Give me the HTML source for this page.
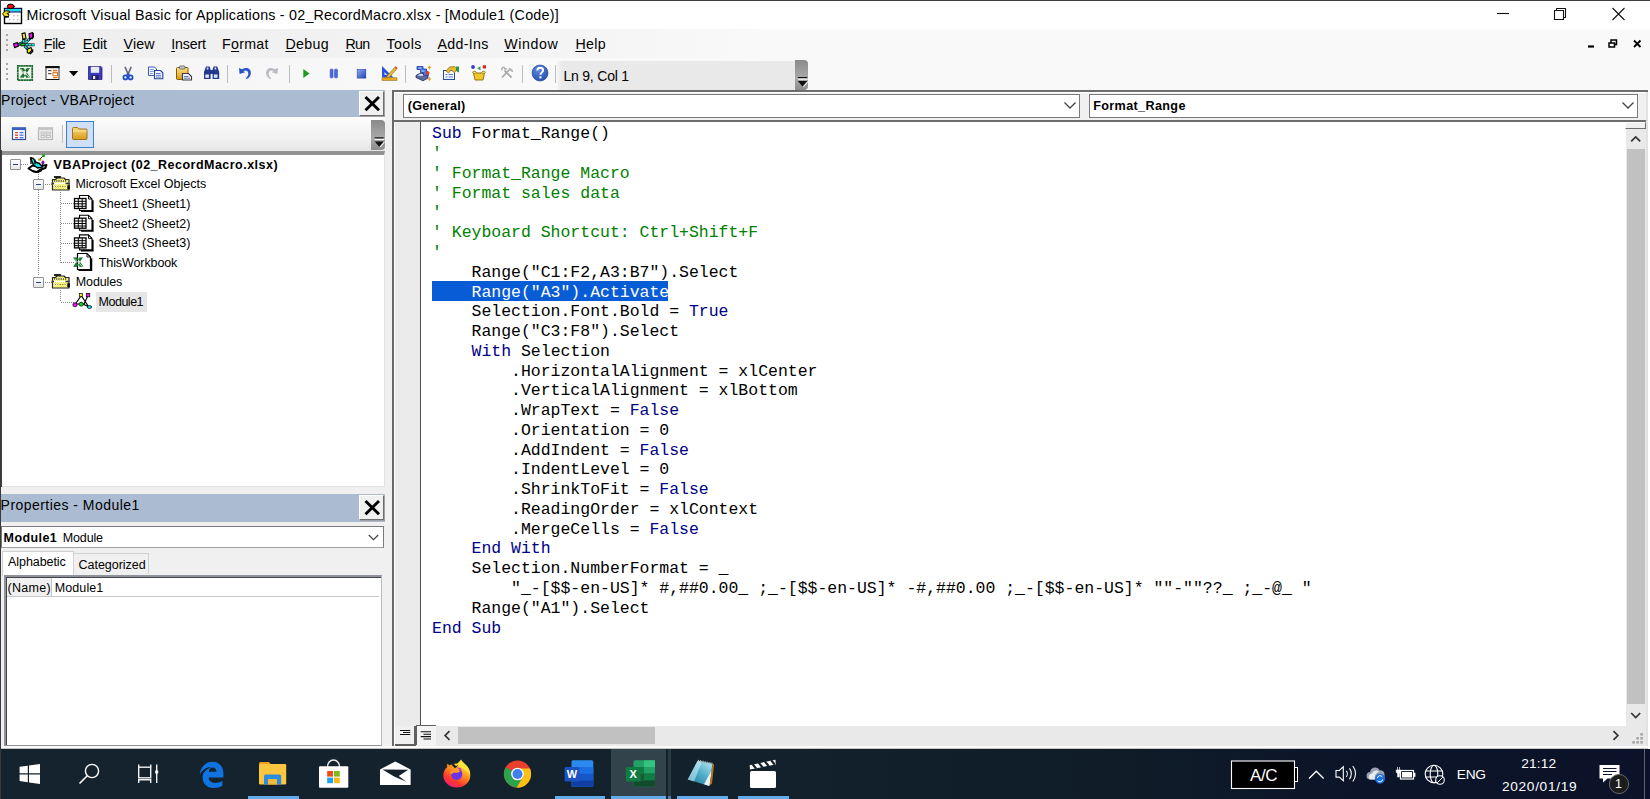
<!DOCTYPE html>
<html lang="en">
<head>
<meta charset="utf-8">
<title>Microsoft Visual Basic for Applications - 02_RecordMacro.xlsx - [Module1 (Code)]</title>
<style>
*{box-sizing:border-box;margin:0;padding:0}
html,body{width:1650px;height:799px;overflow:hidden;background:#f0f0f0}
body{position:relative;font-family:"Liberation Sans",sans-serif;color:#000;font-size:15px}
.a{position:absolute}
.t{position:absolute;white-space:pre;line-height:1}
u{text-decoration:underline;text-underline-offset:2px;text-decoration-thickness:1px}
#titlebar{left:1px;top:1px;width:1649px;height:28px;background:#fff}
#frame-top{left:0;top:0;width:1650px;height:1px;background:#3c3c3c}
#frame-left{left:0;top:0;width:1px;height:799px;background:#3a3a3c;z-index:5}
#menubar{left:1px;top:29px;width:1649px;height:29px;background:linear-gradient(90deg,#eeeeee 0,#f3f3f3 500px,#f9f9f9 760px)}
#toolbar{left:1px;top:58px;width:1649px;height:32px;background:linear-gradient(90deg,#f4f4f4 0,#f9f9f9 500px)}
.menu{}
#lncol{left:557px;top:61px;width:238px;height:28.500px;background:linear-gradient(90deg,#f6f6f6 0,#e9e9e9 5px)}
.sep{width:1px;height:22px;top:64px;background:#c4c4c4}
.grip{width:13px;background:linear-gradient(180deg,#8e8e8e 0,#a8a8a8 60%,#8a8a8a 100%);border-radius:0 4px 4px 0}
/* left panels */
.ptitle{left:1px;width:384px;height:27px;background:#abbcd2}
.pclose{width:25px;height:25px;background:#f0f0f0;border:1px solid;border-color:#fff #6d6d6d #6d6d6d #fff;box-shadow:1px 1px 0 #a0a0a0}
#tree{left:1px;top:154px;width:383px;height:333px;background:#fff}
.tr{font-size:13px}

#ptool{left:1px;top:117px;width:384px;height:34px;background:linear-gradient(180deg,#fdfdfd 0,#f2f2f2 60%,#e6e6e6 100%);border-bottom:0}
#tree{left:1px;top:151px;width:384px;height:336px;background:#fff;border-top:4px solid #929292;border-right:1px solid #e3e3e3;border-bottom:1px solid #e3e3e3}
#treeL{left:0;top:150px;width:2px;height:337px;background:#404040}
.vdot{width:1px;background:repeating-linear-gradient(180deg,#8a8a8a 0,#8a8a8a 1px,transparent 1px,transparent 2px)}
.hdot{height:1px;background:repeating-linear-gradient(90deg,#8a8a8a 0,#8a8a8a 1px,transparent 1px,transparent 2px)}
.xbox{width:11px;height:11px;border:1px solid #919191;background:linear-gradient(180deg,#fff,#e6e6e6);border-radius:1px}
.xbox:after{content:"";position:absolute;left:2px;top:4px;width:5px;height:1px;background:#2a3f8f}
#modsel{left:96px;top:292px;width:51px;height:20px;background:#e6e6e6}
#pcombo{left:1px;top:526px;width:383px;height:22px;background:#fff;border:1px solid #7a7a7a;border-bottom-color:#a0a0a0}
#tab1{left:2px;top:551px;width:72px;height:25px;background:#fff;border:1px solid #d0d0d0;border-bottom:0}
#tab2{left:73px;top:553px;width:76px;height:21px;background:#f0f0f0;border:1px solid #d0d0d0;border-bottom:0}
#plist{left:4px;top:575px;width:378px;height:171px;background:#fff;border:solid;border-width:2px 1px 1px 2px;border-color:#8f939c #b8bcc4 #8f939c #8f939c;box-shadow:inset 1px 1px 0 #444}
#pname{left:7px;top:578px;width:45px;height:18px;background:#f0f0f0;border-right:1px solid #c8c8c8}
#prow{left:7px;top:596px;width:372px;height:1px;background:#c8c8c8}
/* code window */
#codewin{left:392px;top:90px;width:1256px;height:657px;background:#f0f0f0;border-left:2px solid #696969;border-top:2px solid #6d6d6d;box-shadow:inset 1px 1px 0 #fff}
.combo{top:94px;height:24px;background:#fff;border:1px solid #7a7a7a}
#codearea{left:394px;top:120px;width:1252px;height:606px;background:#fff;border-top:2px solid #6d6d6d}
#margin{left:395px;top:122px;width:25px;height:604px;background:#ebebeb}
#marginline{left:420px;top:122px;width:1px;height:604px;background:#4d4d4d}
pre#code{left:432px;top:124.4px;font-family:"Liberation Mono",monospace;font-size:16.475px;line-height:19.77px;color:#000;white-space:pre}
.k{color:#000088}.c{color:#008000}
.sel{color:#fff}
#selbg{left:432px;top:281px;width:236px;height:20px;background:#085cd6}

#vscroll{left:1626px;top:129px;width:20px;height:617px;background:#e9e9e9}
#vthumb{left:1627px;top:149px;width:18px;height:555px;background:#c1c1c1}
#hscroll{left:436px;top:726px;width:1190px;height:20px;background:#e9e9e9}
#hthumb{left:458px;top:727px;width:197px;height:17px;background:#c1c1c1}
#split{left:1625px;top:122px;width:21px;height:7px;background:#f0f0f0;border:1px solid;border-color:#fff #6d6d6d #6d6d6d #fff}
#vb1{left:395px;top:726px;width:21px;height:20px;background:#efefef;border:solid;border-width:0 2px 2px 0;border-color:#5f5f5f}
#vb2{left:416px;top:725px;width:20px;height:20px;background:#f3f3f3;border:solid;border-width:1px 0 0 1px;border-color:#5f5f5f}
.tk{color:#fff}
#taskbar{left:0;top:749px;width:1650px;height:50px;background:linear-gradient(90deg,#14232d 0,#12212b 800px,#0f1c28 1150px,#0c1529 1330px,#0b1229 1650px)}
</style>
</head>
<body>
<div class="a" id="titlebar"></div>
<div class="a" id="menubar"></div>
<div class="a" id="toolbar"></div>
<div class="a" id="frame-top"></div>
<div class="a" id="frame-left"></div>

<!-- TITLE -->
<span class="t" id="title" style="left:26.6px;top:7.80px;font-size:14.3px;letter-spacing:0.22px">Microsoft Visual Basic for Applications - 02_RecordMacro.xlsx - [Module1 (Code)]</span>

<!-- MENU -->
<span class="t menu" id="m1" style="left:43.8px;top:37.48px;font-size:14.2px;letter-spacing:-0.34px"><u>F</u>ile</span>
<span class="t menu" id="m2" style="left:82.8px;top:37.48px;font-size:14.2px;letter-spacing:-0.14px"><u>E</u>dit</span>
<span class="t menu" id="m3" style="left:123.6px;top:37.48px;font-size:14.2px;letter-spacing:0.14px"><u>V</u>iew</span>
<span class="t menu" id="m4" style="left:171.2px;top:37.48px;font-size:14.2px;letter-spacing:-0.16px"><u>I</u>nsert</span>
<span class="t menu" id="m5" style="left:222.0px;top:37.48px;font-size:14.2px;letter-spacing:0.28px">F<u>o</u>rmat</span>
<span class="t menu" id="m6" style="left:285.4px;top:37.48px;font-size:14.2px;letter-spacing:0.35px"><u>D</u>ebug</span>
<span class="t menu" id="m7" style="left:345.6px;top:37.48px;font-size:14.2px;letter-spacing:-0.80px"><u>R</u>un</span>
<span class="t menu" id="m8" style="left:386.4px;top:37.48px;font-size:14.2px;letter-spacing:0.48px"><u>T</u>ools</span>
<span class="t menu" id="m9" style="left:437.4px;top:37.48px;font-size:14.2px;letter-spacing:0.36px"><u>A</u>dd-Ins</span>
<span class="t menu" id="m10" style="left:504.2px;top:37.48px;font-size:14.2px;letter-spacing:0.60px"><u>W</u>indow</span>
<span class="t menu" id="m11" style="left:575.4px;top:37.48px;font-size:14.2px;letter-spacing:0.34px"><u>H</u>elp</span>

<!-- TOOLBAR -->
<div class="a" id="lncol"></div>
<span class="t" id="lnc" style="left:563.4px;top:68.65px;font-size:14px;letter-spacing:-0.20px">Ln 9, Col 1</span>

<!-- ICON OVERLAY 1: title, menu, toolbar -->
<svg class="a" id="ov1" style="left:0;top:0" width="1650" height="120" viewBox="0 0 1650 120" shape-rendering="auto">
<defs>
<linearGradient id="gBlue" x1="0" y1="0" x2="1" y2="1"><stop offset="0" stop-color="#8fb0f2"/><stop offset="1" stop-color="#1f3fb0"/></linearGradient>
<linearGradient id="gGold" x1="0" y1="0" x2="0" y2="1"><stop offset="0" stop-color="#ffe28a"/><stop offset="1" stop-color="#d89a12"/></linearGradient>
<linearGradient id="gGrip" x1="0" y1="0" x2="0" y2="1"><stop offset="0" stop-color="#8a8a8a"/><stop offset="0.6" stop-color="#a9a9a9"/><stop offset="1" stop-color="#8c8c8c"/></linearGradient>
<radialGradient id="gHelp" cx="0.4" cy="0.3" r="0.8"><stop offset="0" stop-color="#5f8be0"/><stop offset="1" stop-color="#1f4aa8"/></radialGradient>
</defs>
<!-- title icon -->
<g>
<rect x="4.5" y="8.5" width="17" height="15" fill="#fff" stroke="#000" stroke-width="1.4"/>
<rect x="5" y="9" width="16" height="2.6" fill="#19e0e8"/>
<rect x="5" y="8" width="16" height="1" fill="#101070"/>
<rect x="5" y="11.4" width="16" height="1.1" fill="#101070"/>
<g fill="#b8b8b8"><rect x="13" y="15" width="1.4" height="1.4"/><rect x="17" y="15" width="1.4" height="1.4"/><rect x="9" y="19" width="1.4" height="1.4"/><rect x="13" y="19" width="1.4" height="1.4"/><rect x="17" y="19" width="1.4" height="1.4"/></g>
<ellipse cx="10.6" cy="6.4" rx="3.3" ry="2.3" fill="#f01010" stroke="#000" stroke-width="1"/>
<path d="M13 5.5l2.2.6-1 1.4z" fill="#000"/>
<path d="M2.5 13.8L5.5 10.8L9.2 11L9.2 13L6.8 13.4L9 14.6L8.4 16.6L4.6 16.4Z" fill="#f2e010" stroke="#000" stroke-width="0.9" stroke-linejoin="round"/>
<path d="M5 17.2l4-.3" stroke="#000" stroke-width="1.2"/>
</g>
<!-- menu grip -->
<g fill="#a6a6a6"><rect x="6" y="34" width="2" height="2"/><rect x="6" y="39" width="2" height="2"/><rect x="6" y="44" width="2" height="2"/><rect x="6" y="49" width="2" height="2"/>
<rect x="6" y="63" width="2" height="2"/><rect x="6" y="68" width="2" height="2"/><rect x="6" y="73" width="2" height="2"/><rect x="6" y="78" width="2" height="2"/></g>
<!-- menu VBA icon -->
<g stroke-linejoin="round" stroke-linecap="butt">
<path d="M17 45.300L22.500 42.600M23.600 42.500L23.800 38.500M25.500 42.500L30 38.500M25.500 44.700L34.500 44.900M24.800 46L28.800 50" stroke="#000" stroke-width="2.900" fill="none"/>
<path d="M17 45.300L22.500 42.600M23.600 42.500L23.800 38.500M25.500 42.500L30 38.500M25.500 44.700L34.500 44.900M24.800 46L28.800 50" stroke="#19e0e8" stroke-width="1.700" fill="none" stroke-dasharray="2.600 0.500"/>
<path d="M22 33.600l3-.8 1 5.800-3 .8z" fill="#f4ec10" stroke="#000" stroke-width="1.100"/>
<path d="M29 33.800l3.600-1.200.6 4.400-3.400 2.400z" fill="#f010f0" stroke="#000" stroke-width="1.100"/>
<path d="M33 33v4.500l-1.500 1.500" stroke="#000" stroke-width="1.600" fill="none"/>
<path d="M13.600 43.800l3.800-1.200 1.200 3.400-4 1.800z" fill="#f010f0" stroke="#000" stroke-width="1.100"/>
<rect x="20.800" y="43.200" width="4.400" height="2.600" fill="#10e010" stroke="#000" stroke-width="1"/>
<path d="M27.400 49.200l3.600-1.600 1 2.200-2.800 3.600-2-1z" fill="#f4ec10" stroke="#000" stroke-width="1.100"/>
<path d="M32.500 49.500v2l-2.500 2.500" stroke="#000" stroke-width="1.600" fill="none"/>
</g>
<!-- window controls -->
<g stroke="#111" stroke-width="1.1" fill="none">
<path d="M1497 13.5h12"/>
<path d="M1554.5 10.5h9v9h-9zM1556.5 10.5v-2h9v9h-2" stroke-linejoin="round"/>
<path d="M1612.5 8l12 12M1624.500 8l-12 12"/>
</g>
<g stroke="#000" stroke-width="1.6" fill="none">
<path d="M1588 46.500h6" stroke-width="2.2"/>
<path d="M1609 43h5.500v4h-5.500zM1611 42.500v-2.500h5.500v4.500h-1.500" stroke-width="1.5"/>
<path d="M1634 40.500l6.500 6.500M1640.500 40.500l-6.500 6.500" stroke-width="1.8"/>
</g>
</svg>
<!-- ICON OVERLAY 2: standard toolbar -->
<svg class="a" id="ov2" style="left:0;top:58px" width="820" height="34" viewBox="0 58 820 34">
<!-- separators -->
<g fill="#bdbdbd"><rect x="111" y="65" width="1" height="18"/><rect x="227" y="65" width="1" height="18"/><rect x="289" y="65" width="1" height="18"/><rect x="405" y="65" width="1" height="18"/><rect x="522" y="65" width="1" height="18"/><rect x="555" y="65" width="1" height="18"/></g>
<!-- excel -->
<rect x="17.800" y="65.800" width="14.400" height="14.400" fill="#eef4ee" stroke="#1b6a2c" stroke-width="1.700" stroke-dasharray="2.400 0.300"/>
<path d="M19.800 68.200l3.800-.2 6.600 9.600-3.800.2zM30 68l-3.400.2-6.800 9.400 3.800.2z" fill="#1c7030"/>
<path d="M21 69.500l8.500 8" stroke="#e8f4e8" stroke-width="0.900"/>
<!-- userform -->
<rect x="46" y="66.500" width="13" height="13" fill="#fff" stroke="#3a3a3a" stroke-width="1"/>
<rect x="45.500" y="66" width="14" height="2.200" fill="#111"/>
<rect x="48" y="70" width="3.500" height="1.200" fill="#555"/><rect x="48" y="73" width="3.500" height="1.200" fill="#555"/>
<rect x="53" y="69.800" width="4.500" height="1.600" fill="#e8781a"/><rect x="53" y="72.600" width="4.500" height="3.200" fill="none" stroke="#e8781a" stroke-width="1.100"/><rect x="53" y="77" width="4.500" height="1.200" fill="#e8781a"/>
<rect x="46" y="79" width="13" height="1" fill="#111"/>
<path d="M69 71h9.200l-4.600 5.200z" fill="#000"/>
<!-- save -->
<path d="M88.500 66.500h12.500l1 1v12h-13.500z" fill="#3d3bbd" stroke="#26248c" stroke-width="0.800"/>
<rect x="90.800" y="66.800" width="8.400" height="6" fill="#e8ecf8"/>
<rect x="91.500" y="75.200" width="7" height="4.600" fill="#23215e"/><rect x="93" y="76" width="2.200" height="3" fill="#e8ecf8"/>
<!-- scissors -->
<path d="M125 66.800l3.600 8.500M131.200 66.800l-3.600 8.500" stroke="#6a7080" stroke-width="1.700" fill="none"/>
<circle cx="125.400" cy="77.400" r="2" fill="none" stroke="#1f4fc8" stroke-width="1.700"/><circle cx="130.600" cy="77.400" r="2" fill="none" stroke="#1f4fc8" stroke-width="1.700"/>
<path d="M126.400 75.600l1.600-2 1.600 2" stroke="#1f4fc8" stroke-width="1.500" fill="none"/>
<!-- copy -->
<path d="M148.500 67h6l2 2v6.500h-8z" fill="#f4f8ff" stroke="#3a5db0" stroke-width="1"/>
<path d="M149.800 69.500h4M149.800 71.500h4M149.800 73.500h3" stroke="#6f8fd0" stroke-width="0.900"/>
<path d="M154.500 70.500h6l2.300 2.300v6h-8.300z" fill="#f4f8ff" stroke="#24409a" stroke-width="1.100"/>
<path d="M156 73.500h4.500M156 75.300h5.200M156 77.100h5.200" stroke="#4a6ac0" stroke-width="0.900"/>
<!-- paste -->
<rect x="176.500" y="67.500" width="11.500" height="12" rx="1" fill="url(#gGold)" stroke="#8a5a08" stroke-width="1"/>
<rect x="179.500" y="66" width="5.500" height="3" rx="1" fill="#c9c9c9" stroke="#555" stroke-width="0.800"/>
<path d="M182.500 73.500h6l3 3v3.500h-9z" fill="#eef2fa" stroke="#3a3a4a" stroke-width="1.100"/>
<path d="M184 76.500h4.500M184 78.200h6" stroke="#5a6a9a" stroke-width="0.900"/>
<!-- binoculars -->
<g fill="#24388e"><path d="M206 66.500h3.600l1 3v9.500h-6.600v-7zM213.600 66.500h3.600l2 5.500v7h-6.600v-9.500z"/><rect x="209.800" y="70" width="3.400" height="4"/></g>
<g fill="#dfe6fa"><rect x="205.300" y="74.500" width="3.600" height="3.300"/><rect x="213.900" y="74.500" width="3.600" height="3.300"/><rect x="206.800" y="67.500" width="1.600" height="2"/><rect x="214.600" y="67.500" width="1.600" height="2"/></g>
<!-- undo -->
<path d="M239 68l.6 6 5.600-1.800-1.900-1.200c2.400-1.400 5-.2 5 2.600 0 2-1 3.500-2.600 4.800l1 .7c2.600-1.400 4.200-3.600 4.200-6.200 0-4.400-4.600-6.400-8.800-3.600z" fill="#2a55c8"/>
<!-- redo -->
<path d="M278 68l-.6 6-5.600-1.800 1.900-1.200c-2.400-1.400-5-.2-5 2.600 0 2 1 3.500 2.600 4.800l-1 .7c-2.600-1.400-4.200-3.600-4.200-6.200 0-4.400 4.600-6.400 8.800-3.600z" fill="#b9bcc2"/>
<!-- run/pause/stop -->
<path d="M303.300 69l6.200 4.500-6.200 4.500z" fill="#1a9a20"/>
<rect x="330.200" y="69.200" width="2.800" height="8.600" rx="0.700" fill="#4a6fe0" stroke="#2440b0" stroke-width="0.600"/><rect x="334.600" y="69.200" width="2.800" height="8.600" rx="0.700" fill="#4a6fe0" stroke="#2440b0" stroke-width="0.600"/>
<rect x="357.200" y="69.500" width="8.600" height="8.600" fill="url(#gBlue)" stroke="#2440b0" stroke-width="0.600"/>
<!-- design mode -->
<path d="M382 66v11.500h11.500z" fill="#2a52d8"/><path d="M384.500 72v3h3z" fill="#cfdcff"/>
<path d="M387 76l7.500-8.500 2 1.800-7.500 8.500-2.600.8z" fill="#e9b62e" stroke="#7a5a10" stroke-width="0.500"/>
<path d="M394.500 67.500l1.200-1.300 2 1.800-1.200 1.300z" fill="#e04a3a"/>
<rect x="382" y="77.800" width="15" height="2.600" fill="#e8a818" stroke="#8a5a08" stroke-width="0.500"/>
<!-- project explorer -->
<path d="M416 75.500l5-2.500 7 3-5 2.800z" fill="#e8eefc" stroke="#1a2a6a" stroke-width="1"/>
<path d="M416 75.500v2l7 3.300 5-2.800v-2" fill="#5a6a9a" stroke="#1a2a6a" stroke-width="0.800"/>
<path d="M417 66.500h6v2.500h3.500v3h2v3.500h-5v-3h-3v-3h-3.500z" fill="#4a78e0" stroke="#1a3aa0" stroke-width="0.800"/>
<path d="M418.500 68h3M421.500 71h3" stroke="#dfe8ff" stroke-width="0.800"/>
<path d="M429.500 65.500l1.600 2-1.600 2-1.600-2zM429.500 77l1.600 2-1.600 2-1.600-2z" fill="#f0a020"/><path d="M427.500 70.500l2.400 2.500-2.400 2.500-2.200-2.500z" fill="#e83a2a"/>
<!-- properties -->
<rect x="443.500" y="70.500" width="11" height="9" fill="#f2f6ff" stroke="#2a4a9a" stroke-width="1"/>
<path d="M445.500 74.500h2M445.500 77h2M448.500 74.500h4.500M448.500 77h4.500" stroke="#5a7ac0" stroke-width="1"/>
<path d="M446 71l3.500-4 5-.5 3 2.500-3 3.500-3.500-2.500-2.500 3z" fill="#e8b838" stroke="#8a6a10" stroke-width="0.700"/>
<path d="M456 66.500l3 0v6l-3-1.500z" fill="#2a9a4a"/>
<!-- object browser -->
<path d="M473.500 73h11l-1.500 7h-8z" fill="#f0c82a" stroke="#8a6a08" stroke-width="0.900"/>
<path d="M472 72.500l3-1.500 2 2.500M486 72.500l-3-1.500-2 2.500" fill="#f8e070" stroke="#8a6a08" stroke-width="0.800"/>
<circle cx="473" cy="67" r="1.900" fill="#3a3ac8"/><rect x="482.800" y="65.300" width="3.200" height="3.200" fill="#e02020"/><path d="M480.500 66.200v4l-3.300-2z" fill="#2aa040"/>
<!-- toolbox (disabled) -->
<path d="M502 77.500l8-8.500M511.500 77.500l-7-7" stroke="#a9a9a9" stroke-width="1.800" fill="none"/>
<path d="M502 70.500c-.8-1.500 0-3 2-3.300l1.200 2 1.600-.5" stroke="#a9a9a9" stroke-width="1.300" fill="none"/>
<path d="M508.500 67.500l3.500 1.500 1.500 2.500-1.500.5-2.500-2z" fill="#b5b5b5"/>
<!-- help -->
<circle cx="540" cy="73" r="8" fill="url(#gHelp)" stroke="#1a3f98" stroke-width="0.600"/>
<path d="M537.300 70.600c0-1.800 1.200-2.800 2.900-2.800 1.700 0 2.900 1 2.900 2.500 0 2-2.600 2.200-2.600 4.500" stroke="#fff" stroke-width="1.900" fill="none"/><rect x="539.400" y="76.300" width="2.100" height="2.100" fill="#fff"/>
<!-- end grip -->
<path d="M795 60h9a4 4 0 0 1 4 4v22a4 4 0 0 1-4 4h-9z" fill="url(#gGrip)"/>
<rect x="797.800" y="77" width="9.400" height="1.300" fill="#111"/><rect x="797.800" y="78.500" width="10" height="1.200" fill="#fff"/><path d="M797.800 81h9.400l-4.700 5.400z" fill="#111"/>
<path d="M803.300 87l4.700-5.500" stroke="#fff" stroke-width="1"/>
</svg>

<!-- PROJECT PANEL -->
<div class="a ptitle" style="top:90px"></div>
<span class="t" id="pt1" style="left:1px;top:93.45px;font-size:14px;letter-spacing:0.29px">Project - VBAProject</span>
<div class="a pclose" style="left:359px;top:91px"><svg width="23" height="23" viewBox="0 0 23 23"><path d="M5.500 5L19 18.200M19 5L5.500 18.200" stroke="#000" stroke-width="2.900" fill="none"/></svg></div>
<div class="a" id="ptool"></div>
<div class="a" id="tree"></div>
<div class="a" id="treeL"></div>
<!-- tree lines -->
<div class="a vdot" style="left:38px;top:172px;height:104px"></div>
<div class="a vdot" style="left:60px;top:192px;height:71px"></div>
<div class="a vdot" style="left:60px;top:290px;height:12px"></div>
<div class="a hdot" style="left:21px;top:164px;width:8px"></div>
<div class="a hdot" style="left:43px;top:184px;width:9px"></div>
<div class="a hdot" style="left:43px;top:282px;width:9px"></div>
<div class="a hdot" style="left:61px;top:203px;width:13px"></div>
<div class="a hdot" style="left:61px;top:223px;width:13px"></div>
<div class="a hdot" style="left:61px;top:243px;width:13px"></div>
<div class="a hdot" style="left:61px;top:262px;width:13px"></div>
<div class="a hdot" style="left:61px;top:302px;width:13px"></div>
<div class="a xbox" style="left:10px;top:159px"></div>
<div class="a xbox" style="left:33px;top:179px"></div>
<div class="a xbox" style="left:33px;top:277px"></div>
<div class="a" id="modsel"></div>
<span class="t tr" id="tr1" style="left:53.6px;top:158.87px;font-weight:bold;font-size:12.5px;letter-spacing:0.48px">VBAProject (02_RecordMacro.xlsx)</span>
<span class="t tr" id="tr2" style="left:75.4px;top:178.22px;font-size:12.5px;letter-spacing:0.01px">Microsoft Excel Objects</span>
<span class="t tr" id="tr3" style="left:98.4px;top:197.72px;font-size:12.5px;letter-spacing:0.07px">Sheet1 (Sheet1)</span>
<span class="t tr" id="tr4" style="left:98.4px;top:217.52px;font-size:12.5px;letter-spacing:0.07px">Sheet2 (Sheet2)</span>
<span class="t tr" id="tr5" style="left:98.4px;top:236.92px;font-size:12.5px;letter-spacing:0.07px">Sheet3 (Sheet3)</span>
<span class="t tr" id="tr6" style="left:98.8px;top:256.52px;font-size:12.5px;letter-spacing:-0.10px">ThisWorkbook</span>
<span class="t tr" id="tr7" style="left:75.8px;top:276.42px;font-size:12.5px;letter-spacing:-0.14px">Modules</span>
<span class="t tr" id="tr8" style="left:98.6px;top:296.12px;font-size:12.5px;letter-spacing:-0.50px">Module1</span>

<!-- ICON OVERLAY 3: project panel toolbar + tree icons -->
<svg class="a" id="ov3" style="left:0;top:117px" width="386" height="200" viewBox="0 117 386 200">
<defs>
<linearGradient id="gFold" x1="0" y1="0" x2="0" y2="1"><stop offset="0" stop-color="#f8d878"/><stop offset="1" stop-color="#d89a1a"/></linearGradient>
<pattern id="dith" width="2" height="2" patternUnits="userSpaceOnUse"><rect width="2" height="2" fill="#f4f000"/><rect width="1" height="1" fill="#fff"/><rect x="1" y="1" width="1" height="1" fill="#fff"/></pattern>
</defs>
<!-- view code -->
<rect x="12.500" y="128" width="13" height="11.500" fill="#fff" stroke="#2f4f9f" stroke-width="1.200"/>
<rect x="12" y="127.500" width="14" height="2.600" fill="#3a62c0"/>
<g fill="#e0402a"><rect x="15" y="132" width="3" height="1.300"/><rect x="15" y="134.500" width="3" height="1.300"/><rect x="15" y="137" width="3" height="1.300"/></g>
<g fill="#4a72d0"><rect x="19.500" y="132" width="4" height="1.300"/><rect x="19.500" y="134.500" width="4" height="1.300"/><rect x="19.500" y="137" width="4" height="1.300"/></g>
<!-- view object (disabled) -->
<rect x="38.500" y="128" width="14" height="11.500" fill="#ececec" stroke="#b8b8b8" stroke-width="1.200"/>
<rect x="38" y="127.500" width="15" height="2.400" fill="#c4c4c4"/>
<g fill="none" stroke="#bdbdbd" stroke-width="0.900"><rect x="41" y="132" width="4" height="2"/><rect x="46.500" y="132" width="4" height="2"/><rect x="41" y="135.500" width="4" height="2"/><rect x="46.500" y="135.500" width="4" height="2"/></g>
<rect x="62" y="125" width="1" height="18" fill="#bdbdbd"/>
<!-- toggle folders (pressed) -->
<rect x="66.500" y="121.500" width="27" height="26" fill="#cfe0f6" stroke="#3c7fd8" stroke-width="1"/>
<path d="M72.500 128.500a1 1 0 0 1 1-1h4l1.500 1.500h7a1 1 0 0 1 1 1v8.500a1 1 0 0 1-1 1h-12.500a1 1 0 0 1-1-1z" fill="url(#gFold)" stroke="#9a6a10" stroke-width="0.900"/>
<path d="M73 131h13.500" stroke="#fbe9a8" stroke-width="1"/>
<!-- grip -->
<path d="M371 120h10a4 4 0 0 1 4 4v22a4 4 0 0 1-4 4h-10z" fill="url(#gGrip)"/>
<rect x="374.700" y="137.300" width="9" height="1.300" fill="#111"/><rect x="374.700" y="138.800" width="9.600" height="1.200" fill="#fff"/><path d="M374.700 141.400h9l-4.500 5.300z" fill="#111"/>
<path d="M380 147.200l4.500-5.300" stroke="#fff" stroke-width="1"/>
<!-- project icon -->
<g>
<path d="M28.500 168.500l4-3 6 1 8-1.500-1 3-5 1.500-4 2.500-4-1z" fill="#fff" stroke="#000" stroke-width="1.900" stroke-linejoin="round"/><path d="M33 171.500l5 .8 4-2" stroke="#000" stroke-width="1.400" fill="none"/>
<path d="M30.500 158l3 .5 2 3.500 4 1.500 3 3.500-5 1-4-3z" fill="#19e0e8" stroke="#000" stroke-width="1.400" stroke-linejoin="round"/>
<path d="M31 157v7M35 159.500v5" stroke="#000" stroke-width="1.300"/>
<path d="M43 156l-3.500 3.500M42 162l1 4" stroke="#000" stroke-width="1"/>
<rect x="42.300" y="154.300" width="2.600" height="2.600" fill="#10a020"/><rect x="38.300" y="158.500" width="3" height="2.200" fill="#9a9a10"/><ellipse cx="43" cy="162.400" rx="1.400" ry="2" fill="#8010a0"/>
</g>
<!-- folder icons -->
<g id="fold1">
<path d="M54.500 177.500h6v-1h-6zM52.500 179.500h3l1.500-1.500h7l1.500 1.500h3.500v10.500h-16.500z" fill="url(#dith)" stroke="#222" stroke-width="1.200" stroke-linejoin="round"/>
<path d="M54 181h13" stroke="#444" stroke-width="1.400" stroke-dasharray="1.200 1"/>
<path d="M52 183.500h15.500" stroke="#fff" stroke-width="1.500"/><path d="M51.500 183.500h2.500M65.500 183.500h4" stroke="#333" stroke-width="1.300"/>
<path d="M55 186.500h11" stroke="#777" stroke-width="1" stroke-dasharray="1 1.400"/>
<rect x="67.300" y="185.300" width="2.500" height="3.900" fill="#000"/>
</g>
<use href="#fold1" y="98"/>
<!-- sheet icons -->
<g id="sh1">
<path d="M79.500 195.500h9l3.500 3.500v11.500h-12.500z" fill="#fff" stroke="#000" stroke-width="1.100"/>
<path d="M88.500 195.500v3.500h3.500" fill="none" stroke="#000" stroke-width="0.900"/>
<path d="M81 211.300h11.800v-11" fill="none" stroke="#000" stroke-width="1.600"/>
<rect x="74.500" y="198.500" width="11.500" height="10" fill="#fff" stroke="#000" stroke-width="1.300"/>
<path d="M74.500 201.300h11.500M74.500 203.800h11.500M74.500 206.300h11.500M78.300 198.500v10M82.200 198.500v10" stroke="#000" stroke-width="1"/>
</g>
<use href="#sh1" y="19.700"/><use href="#sh1" y="39.400"/>
<!-- ThisWorkbook -->
<path d="M77.500 253.500h9.500l3.500 3.500v12.500h-13z" fill="#fff" stroke="#000" stroke-width="1.200"/>
<path d="M87 253.500v3.500h3.500" fill="none" stroke="#000" stroke-width="0.900"/>
<path d="M78.500 270.300h13v-12" fill="none" stroke="#000" stroke-width="1.500"/>
<path d="M73 257.600l3.800-.4 6.600 9.400-3.600.4zM83 257.200l-3.600.3-6.400 9.200 3.800.3z" fill="#1f7a35"/>
<path d="M74.500 259l8 7.500" stroke="#dff0df" stroke-width="0.800"/>
<!-- module icon -->
<g stroke="#000" stroke-width="1.200" fill="none"><path d="M75 304.500l6-8.500M81 304h-5M81.500 296l7 10.500M88 295.500l-4 8.500M83 304l6 3"/></g>
<rect x="79.300" y="293.600" width="3" height="3" fill="#f4ec10" stroke="#000" stroke-width="0.700"/><rect x="86.600" y="293.400" width="3.200" height="3.400" fill="#f010f0" stroke="#000" stroke-width="0.700"/>
<ellipse cx="75" cy="304.800" rx="2.200" ry="2" fill="#f010f0" stroke="#000" stroke-width="0.700"/><ellipse cx="81.300" cy="304.200" rx="2.200" ry="1.900" fill="#10d020" stroke="#000" stroke-width="0.700"/><ellipse cx="89.500" cy="307" rx="2.200" ry="1.500" fill="#10e0e8" stroke="#000" stroke-width="0.700"/>
</svg>

<!-- PROPERTIES PANEL -->
<div class="a ptitle" style="top:494px;height:28px"></div>
<span class="t" id="pt2" style="left:0.6px;top:498.15px;font-size:14px;letter-spacing:0.46px">Properties - Module1</span>
<div class="a pclose" style="left:359px;top:495px"><svg width="23" height="23" viewBox="0 0 23 23"><path d="M5.500 5L19 18.200M19 5L5.500 18.200" stroke="#000" stroke-width="2.900" fill="none"/></svg></div>
<div class="a" id="pcombo"></div>
<span class="t tr" id="pc1" style="left:3.6px;top:531.62px;font-weight:bold;font-size:12.5px;letter-spacing:0.4px">Module1</span>
<span class="t tr" id="pc2" style="left:62.8px;top:531.62px;font-size:12.5px;letter-spacing:-0.16px">Module</span>
<svg class="a" style="left:366px;top:532px" width="14" height="10" viewBox="0 0 14 10"><path d="M2.800 3l4.700 4.700 4.700-4.700" stroke="#444" stroke-width="1.200" fill="none"/></svg>
<div class="a" id="tab2"></div>
<div class="a" id="tab1"></div>
<span class="t tr" id="tb1" style="left:8.0px;top:556.32px;font-size:12.5px;letter-spacing:-0.06px">Alphabetic</span>
<span class="t tr" id="tb2" style="left:78.6px;top:558.52px;font-size:12.5px;letter-spacing:-0.04px">Categorized</span>
<div class="a" id="plist"></div>
<div class="a" id="pname"></div>
<div class="a" id="prow"></div>
<span class="t tr" id="pn1" style="left:7.5px;top:582.42px;font-size:12.5px;letter-spacing:0.3px">(Name)</span>
<span class="t tr" id="pn2" style="left:54.8px;top:582.42px;font-size:12.5px;letter-spacing:0.08px">Module1</span>

<!-- CODE WINDOW -->
<div class="a" id="codewin"></div>
<div class="a combo" style="left:403px;width:677px"></div>
<div class="a combo" style="left:1089px;width:549px"></div>
<div class="a" id="codearea"></div>
<div class="a" id="margin"></div>
<div class="a" id="marginline"></div>

<span class="t tr" id="cb1" style="left:407.8px;top:99.53px;font-weight:bold;font-size:12.6px;letter-spacing:0.27px">(General)</span>
<span class="t tr" id="cb2" style="left:1093.2px;top:99.53px;font-weight:bold;font-size:12.6px;letter-spacing:0.37px">Format_Range</span>
<!-- code window chrome -->
<div class="a" id="vscroll"></div>
<div class="a" id="vthumb"></div>
<div class="a" id="hscroll"></div>
<div class="a" id="hthumb"></div>
<div class="a" id="split"></div>
<div class="a" id="vb1"></div>
<div class="a" id="vb2"></div>
<svg class="a" id="ov4" style="left:392px;top:91px" width="1258" height="658" viewBox="392 91 1258 658">
<g stroke="#444" stroke-width="1.300" fill="none">
<path d="M1064.500 102.500l5.500 5.500 5.500-5.500"/><path d="M1622.500 102.500l5.500 5.500 5.500-5.500"/>
</g>
<g stroke="#333" stroke-width="1.700" fill="none">
<path d="M1631.200 141.400l4.500-4.500 4.500 4.500"/><path d="M1631.200 713l4.500 4.500 4.500-4.500"/>
<path d="M449.500 731.100l-4.400 4.400 4.400 4.400"/><path d="M1613.500 731.100l4.400 4.400-4.400 4.400"/>
</g>
<g fill="#a9a9a9"><rect x="1640.300" y="733" width="2.600" height="2.600"/><rect x="1636.300" y="737" width="2.600" height="2.600"/><rect x="1640.300" y="737" width="2.600" height="2.600"/><rect x="1632.300" y="741" width="2.600" height="2.600"/><rect x="1636.300" y="741" width="2.600" height="2.600"/><rect x="1640.300" y="741" width="2.600" height="2.600"/></g>
<g stroke="#111" stroke-width="1.100"><path d="M400 730.500h10.200M403 732.500h7.200M400 734.500h10.200"/><path d="M420.700 731.800h10.300M423.500 734.200h7.500M420.700 736.600h10.300M423.500 739h7.500"/></g>
</svg>
<div class="a" id="selbg"></div>
<pre class="a" id="code"><span class="k">Sub</span> Format_Range()
<span class="c">'</span>
<span class="c">' Format_Range Macro</span>
<span class="c">' Format sales data</span>
<span class="c">'</span>
<span class="c">' Keyboard Shortcut: Ctrl+Shift+F</span>
<span class="c">'</span>
    Range("C1:F2,A3:B7").Select
<span class="sel">    Range("A3").Activate</span>
    Selection.Font.Bold = <span class="k">True</span>
    Range("C3:F8").Select
    <span class="k">With</span> Selection
        .HorizontalAlignment = xlCenter
        .VerticalAlignment = xlBottom
        .WrapText = <span class="k">False</span>
        .Orientation = 0
        .AddIndent = <span class="k">False</span>
        .IndentLevel = 0
        .ShrinkToFit = <span class="k">False</span>
        .ReadingOrder = xlContext
        .MergeCells = <span class="k">False</span>
    <span class="k">End With</span>
    Selection.NumberFormat = _
        "_-[$$-en-US]* #,##0.00_ ;_-[$$-en-US]* -#,##0.00 ;_-[$$-en-US]* ""-""??_ ;_-@_ "
    Range("A1").Select
<span class="k">End Sub</span></pre>

<div class="a" style="left:1px;top:746px;width:1649px;height:3px;background:#fafafa;border-bottom:1px solid #c4c4c4"></div>
<div class="a" style="left:1648px;top:90px;width:2px;height:659px;background:#fff"></div>
<div class="a" style="left:1646px;top:92px;width:2px;height:654px;background:#e2e2e2"></div>
<!-- TASKBAR -->
<div class="a" id="taskbar"></div>
<!-- TASKBAR ICONS -->
<div class="a" style="left:611px;top:749px;width:55px;height:50px;background:#33434c"></div>
<div class="a" style="left:668px;top:749px;width:3px;height:50px;background:#2b3a44"></div>
<svg class="a" id="ov5" style="left:0;top:749px" width="1650" height="50" viewBox="0 749 1650 50">
<defs>
<linearGradient id="gFx" x1="0.850" y1="0.100" x2="0.250" y2="1"><stop offset="0" stop-color="#ffe03a"/><stop offset="0.350" stop-color="#ff9420"/><stop offset="0.700" stop-color="#ff3a2a"/><stop offset="1" stop-color="#ee1a78"/></linearGradient>
<linearGradient id="gNp" x1="0.2" y1="1" x2="0.9" y2="0"><stop offset="0" stop-color="#1f7f9e"/><stop offset="0.5" stop-color="#4fb0cc"/><stop offset="1" stop-color="#b8e2f0"/></linearGradient>
</defs>
<!-- running indicators -->
<g fill="#62aae8"><rect x="248" y="796" width="51" height="3"/><rect x="555" y="796" width="50" height="3"/><rect x="611" y="796" width="55" height="3"/><rect x="668" y="796" width="3" height="3" fill="#4a7eae"/><rect x="677" y="796" width="51" height="3"/><rect x="738" y="796" width="51" height="3"/></g>
<!-- start -->
<g fill="#fff"><path d="M19.600 766.800L27.800 765.700V773.300H19.600ZM29 765.500L40 764V773.300H29ZM19.600 774.500H27.800V782.200L19.600 781.100ZM29 774.500H40V784L29 782.400Z"/></g>
<!-- search -->
<circle cx="92" cy="771" r="6.600" fill="none" stroke="#fff" stroke-width="1.400"/><path d="M87.300 775.700l-7.800 7.800" stroke="#fff" stroke-width="1.600"/>
<!-- task view -->
<g fill="none" stroke="#f2f2f2" stroke-width="1.400"><rect x="138.700" y="767.200" width="12" height="10.600"/><path d="M138.700 767.200v-2.800M150.700 767.200v-2.800M138.700 783v-3.200h12v3.200M156.700 764.400v18.600"/></g><rect x="155.200" y="770.500" width="3" height="3" fill="#fff"/>
<!-- edge -->
<path fill-rule="evenodd" d="M199.800 774.500C200.500 767 205.500 761.800 212.500 761.800C219.500 761.800 223.400 767 223.400 773.500L223.400 777.600L208.600 777.600C208.900 781 211.500 783 215 783C217.800 783 220.200 782.200 222.400 780.800L222.400 785.800C220 787.200 217.200 788 213.800 788C207 788 202.600 783.600 202.600 777.200C202.600 772.800 205 769.200 208.600 767.200C204.800 768.200 201.600 770.800 199.800 774.500ZM208.800 771.800L216.600 771.800C216.400 769.200 215 767.600 212.600 767.600C210.400 767.600 209.200 769.200 208.800 771.800Z" fill="#0f74e2"/>
<path d="M201.300 776C202.800 771.600 205.800 768.800 209.800 767.300" fill="none" stroke="#14222c" stroke-width="1.300"/>
<!-- explorer -->
<path d="M259 763.500a1.500 1.500 0 0 1 1.500-1.500h8.500l2 2.500h-12z" fill="#e9a21c"/>
<rect x="259" y="764" width="27.200" height="20.500" rx="1.200" fill="#fcc73f"/>
<path d="M264 784.500v-8.500a1.600 1.600 0 0 1 1.600-1.600h14a1.600 1.600 0 0 1 1.600 1.600v8.500h-4.200v-5.500h-8.800v5.500z" fill="#2e8be0"/>
<rect x="268.200" y="779" width="8.800" height="5.500" fill="#f4b83a"/>
<!-- store -->
<path d="M327.500 767c0-4 2.500-7 6-7s6 3 6 7" fill="none" stroke="#e8e8e8" stroke-width="1.500"/>
<rect x="319" y="766.200" width="29.300" height="21.500" rx="1" fill="#fff"/>
<rect x="327.200" y="771" width="5.800" height="5.600" fill="#f04a1f"/><rect x="334" y="771" width="5.800" height="5.600" fill="#7cbb1a"/><rect x="327.200" y="777.600" width="5.800" height="5.600" fill="#1aa3ee"/><rect x="334" y="777.600" width="5.800" height="5.600" fill="#fcb814"/>
<!-- mail -->
<path d="M380 769.500l15.300-8.100 15.300 8.100v15.500h-30.600z" fill="#fff"/>
<path d="M382.500 769.600l25.800.2-9.600 6.200 7.600 5.800-12.200-5.200z" fill="#15222c"/>
<!-- firefox -->
<ellipse cx="456.800" cy="775.500" rx="13.500" ry="12" fill="url(#gFx)"/>
<path d="M456.500 765.500C457.500 763 459.500 761.500 461.300 759.600C462 762 465 763.500 467.500 766.500C469.300 768.800 470 771 470.200 774L462 768Z" fill="#ffe23a"/>
<path d="M451.300 764.600L455.400 768.800L458.600 764.400L456 766.300L453.800 763.800Z" fill="#13212b"/>
<path d="M446.600 766.500L447.600 763.400L449.800 766L451.400 764.600L452.600 767.600Z" fill="#ff8a1f"/>
<ellipse cx="456.600" cy="774" rx="5.700" ry="6" fill="#6b32e6"/>
<path d="M452 769.500C454 767.800 457.500 767.300 460.500 768.500L458.600 770.200L460.800 771L457.500 772.800L453.500 772.800L450.600 774.800C450 772.800 450.600 770.800 452 769.500Z" fill="#ff9a24"/>
<path d="M457 767.600C459 767.400 461 768.200 462 769.600L459.500 769.400Z" fill="#a83af0"/>
<!-- chrome -->
<circle cx="517.500" cy="774" r="13.600" fill="#e8402e"/>
<path d="M517.500 774l-11.800-6.800a13.600 13.600 0 0 0 5 18.600 13.600 13.600 0 0 0 6 1.800l6.500-11.200z" fill="#2da24a"/>
<path d="M517.500 774l5.700 2.400-6.500 11.200a13.600 13.600 0 0 0 14.400-13.600 13.600 13.600 0 0 0-1.100-5.400h-12.500z" fill="#fbc116"/>
<circle cx="517.500" cy="774" r="6.300" fill="#fff"/><circle cx="517.500" cy="774" r="5" fill="#3f80ea"/>
<!-- word -->
<rect x="571.500" y="760.300" width="21.800" height="26.500" rx="1.500" fill="#2a8af0"/><rect x="571.500" y="767" width="21.800" height="6.600" fill="#1d6ee0"/><rect x="571.500" y="773.600" width="21.800" height="6.600" fill="#1556c8"/><path d="M571.500 780.200h21.800v5.100a1.500 1.500 0 0 1-1.500 1.500h-20.300z" fill="#103fa4"/>
<rect x="564.600" y="767" width="14.800" height="14.500" rx="1.200" fill="#1a52c0"/>
<text x="572" y="778.400" font-family="Liberation Sans,sans-serif" font-weight="bold" font-size="11" fill="#fff" text-anchor="middle">W</text>
<!-- excel -->
<rect x="633.500" y="760.300" width="21.500" height="26.500" rx="1.500" fill="#21a366"/><rect x="644" y="760.300" width="11" height="6.700" fill="#33c481"/><rect x="633.500" y="767" width="10.500" height="6.600" fill="#107c41"/><rect x="644" y="767" width="11" height="6.600" fill="#21a366"/><rect x="633.500" y="773.600" width="21.500" height="6.600" fill="#185c37"/><rect x="644" y="773.600" width="11" height="6.600" fill="#107c41"/><path d="M633.500 780.200h21.500v5.100a1.500 1.500 0 0 1-1.500 1.500h-20z" fill="#124a2c"/>
<rect x="625.800" y="767" width="14.800" height="14.500" rx="1.200" fill="#107c41"/>
<text x="633.200" y="778.400" font-family="Liberation Sans,sans-serif" font-weight="bold" font-size="11" fill="#fff" text-anchor="middle">X</text>
<!-- notepad -->
<path d="M697.600 760.700L712.500 763.800L709.400 785.900L687.700 779.600Z" fill="url(#gNp)"/>
<path d="M697.600 760.700L702 761.600L694 781.400L687.700 779.600Z" fill="#d4eef6" opacity="0.550"/>
<path d="M711.800 770L709.400 785.900L704 784.300Z" fill="#eef4f8"/>
<path d="M712.500 763.800L714.100 764.600L712 783.500L709.600 785.600Z" fill="#b8741a"/>
<path d="M698 760.700L712.500 763.700" stroke="#b4bec4" stroke-width="2" stroke-dasharray="1 0.800"/>
<!-- clapperboard -->
<rect x="750" y="771" width="26" height="17" rx="1.600" fill="#fff"/>
<path d="M749.600 765.200L775.400 759.800L775.800 764.400L750 769.400z" fill="#fff"/>
<path d="M752.600 764.200l3.600 4.400M758.800 762.900l3.600 4.400M765 761.600l3.600 4.400M771.200 760.300l3.600 4.400" stroke="#14212b" stroke-width="2.200"/>
<!-- tray -->
<rect x="1231.500" y="761" width="63" height="27.500" fill="#000" stroke="#fff" stroke-width="1.100"/><rect x="1294.500" y="767.500" width="3" height="14" fill="#000" stroke="#fff" stroke-width="1"/>
<path d="M1309 778.500l7.300-7.300 7.300 7.300" fill="none" stroke="#fff" stroke-width="1.300"/>
<path d="M1336 770.500h3.300l4-3.700v14l-4-3.700h-3.300z" fill="none" stroke="#fff" stroke-width="1.100"/><path d="M1346.300 770.800c1.300 1.600 1.300 4.400 0 6M1349.500 768.300c2.400 3 2.400 7.800 0 10.800M1352.800 766c3.600 4.600 3.600 11 0 15.500" fill="none" stroke="#fff" stroke-width="1.100"/>
<path d="M1369.500 779.500a3.800 3.800 0 0 1 .6-7.500 5.200 5.200 0 0 1 9.800-1.600 4 4 0 0 1 4.600 4v5.100z" fill="#9aa4ae"/><path d="M1370 779.500a3.400 3.400 0 0 1 2-6 4.600 4.600 0 0 1 7-2 7 7 0 0 0-4 8z" fill="#e8ecf0"/>
<circle cx="1380" cy="778.700" r="5" fill="#1a6fe0"/><path d="M1377.300 778a2.800 2.800 0 0 1 5-1.200M1382.700 779.500a2.800 2.800 0 0 1-5 1.200" fill="none" stroke="#fff" stroke-width="1"/>
<rect x="1400.500" y="770.500" width="13" height="8.500" fill="none" stroke="#fff" stroke-width="1.200"/><rect x="1402" y="772" width="10" height="5.500" fill="#fff"/><rect x="1414" y="772.800" width="1.400" height="4" fill="#fff"/>
<path d="M1397.500 767v3M1399.500 767v3M1396.300 770h4.400v2.200l-1.400 1.500v3.300h-1.600v-3.300l-1.400-1.500z" fill="#fff" stroke="#fff" stroke-width="0.700"/>
<g fill="none" stroke="#fff" stroke-width="1.100"><circle cx="1434" cy="774" r="8.800"/><ellipse cx="1434" cy="774" rx="3.800" ry="8.800"/><path d="M1425.500 771h17M1425.500 777h13"/></g>
<circle cx="1440" cy="780" r="4.300" fill="#0d162a" stroke="#fff" stroke-width="1.100"/><path d="M1437.200 782.800l5.600-5.600" stroke="#fff" stroke-width="1"/>
<path d="M1599.500 765h20v13.500h-12l-4.500 4v-4h-3.500z" fill="#fff"/><path d="M1603 768.500h13.500M1603 771.500h13.500M1603 774.500h9" stroke="#0d162a" stroke-width="1.100"/>
<circle cx="1619" cy="784" r="9.600" fill="#1c1c1c" stroke="#6a6a6a" stroke-width="1"/>
<rect x="1644" y="749" width="1" height="50" fill="#5a6270"/>
</svg>
<span class="t tk" id="tk1" style="left:1250.0px;top:766.61px;font-size:17px;letter-spacing:-0.40px">A/C</span>
<span class="t tk" id="tk2" style="left:1456.8px;top:768.10px;font-size:13.7px;letter-spacing:-0.30px">ENG</span>
<span class="t tk" id="tk3" style="left:1521.2px;top:756.90px;font-size:13.7px;letter-spacing:0.17px">21:12</span>
<span class="t tk" id="tk4" style="left:1502.0px;top:779.50px;font-size:13.7px;letter-spacing:0.67px">2020/01/19</span>
<span class="t tk" id="tk5" style="left:1615px;top:777.92px;font-size:12.5px">1</span>
</body>
</html>
